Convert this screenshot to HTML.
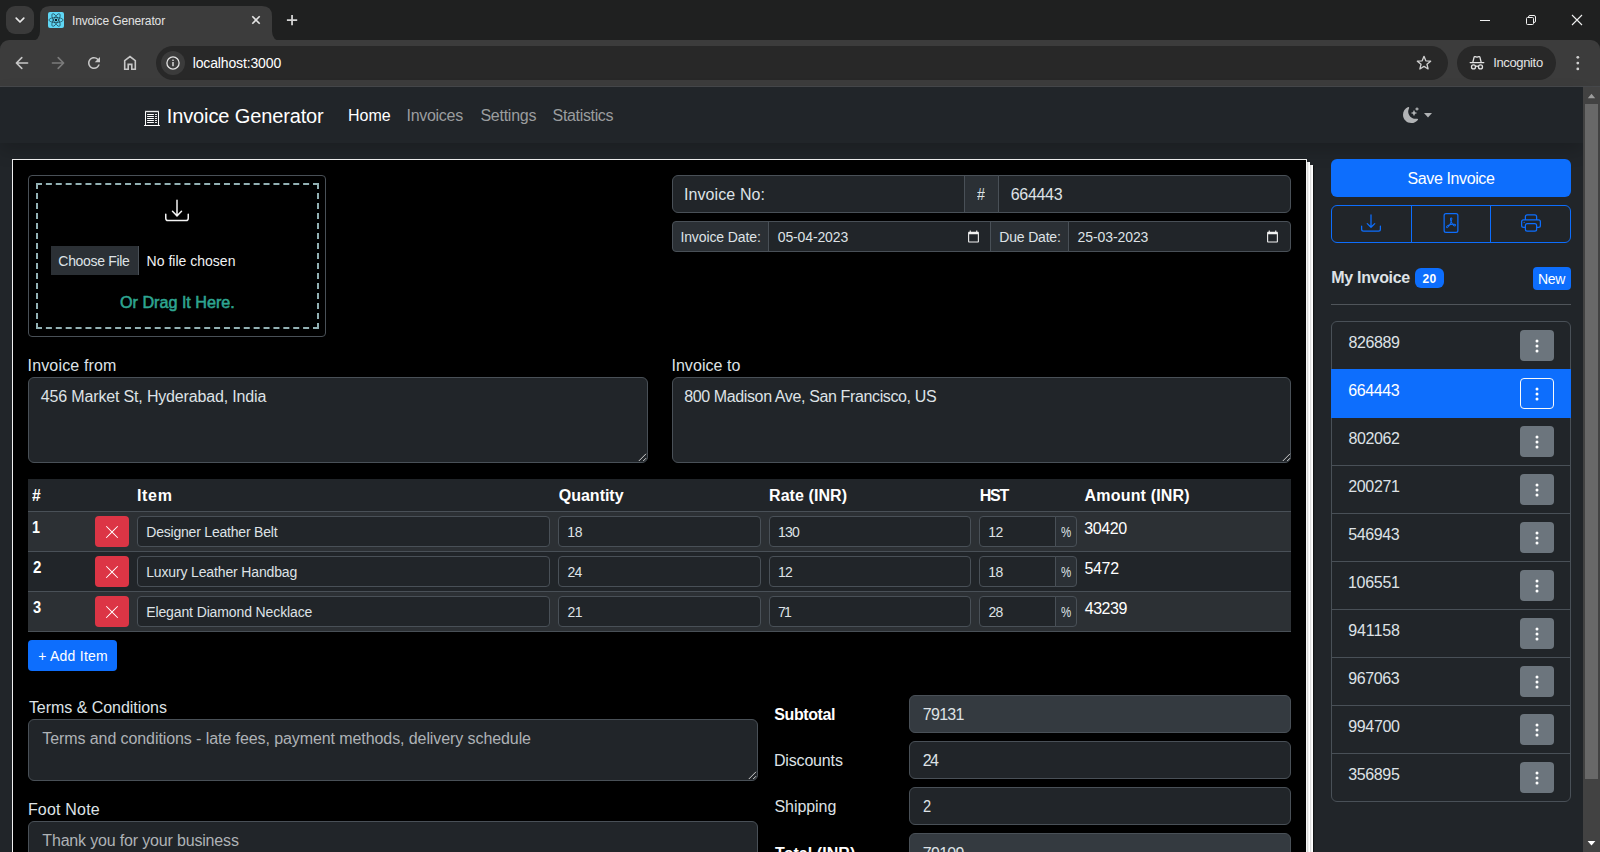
<!DOCTYPE html>
<html lang="en">
<head>
<meta charset="utf-8">
<title>Invoice Generator</title>
<style>
*{box-sizing:border-box}
html,body{margin:0;padding:0}
body{width:1600px;height:852px;overflow:hidden;position:relative;background:#212529;font-family:"Liberation Sans",sans-serif;color:#dee2e6}
.a{position:absolute}
.t{position:absolute;white-space:pre;line-height:1;color:#dee2e6}
svg{position:absolute;overflow:visible}
/* browser chrome */
#strip{left:0;top:0;width:1600px;height:52px;background:#1f2020}
#toolbar{left:0;top:40px;width:1600px;height:47px;background:#3c3c3c;border-radius:9px 9px 0 0;border-bottom:1px solid #46484b}
#tabsearch{left:6px;top:6px;width:28px;height:28px;border-radius:9px;background:#3a3a3a}
.pill{background:#282828;border-radius:17px;height:34px;top:46px}
/* page */
#page{left:0;top:87px;width:1583px;height:765px;background:#212529;overflow:hidden}
#nav{left:0;top:87px;width:1583px;height:56px;background:#212529;box-shadow:0 8px 16px rgba(0,0,0,.17)}
#sbar{left:1583px;top:87px;width:17px;height:765px;background:#424242}
#thumb{left:1585px;top:104px;width:13px;height:675px;background:#686868}
#card{left:12px;top:159px;width:1295.2px;height:720px;background:#000;border:1px solid #f1f1f1;box-shadow:1px 3px 0 #dadada,2px 3px 0 #f0f0f0,3px 3px 0 #fff,4px 6px 0 #dedede,5px 6px 0 #f6f6f6,6px 6px 0 #fff,7px 7px 1px rgba(0,0,0,.45)}
.inp{position:absolute;background:#212529;border:1px solid #495057;border-radius:6px}
.sm{border-radius:4px}
.igt{position:absolute;background:#2b3035;border:1px solid #495057}
.ro{background:#343a40}
.del{position:absolute;width:34px;height:31px;background:#dc3545;border-radius:4px}
.keb{position:absolute;left:1520px;width:34px;height:31px;background:#6c757d;border-radius:4px}
.hl{position:absolute;height:1px;background:#495057}
.pri{background:#0d6efd}
</style>
</head>
<body>
<!-- ===== browser chrome ===== -->
<div class="a" id="strip"></div>
<div class="a" id="tabsearch"></div>
<svg style="left:0;top:0" width="1600" height="87" viewBox="0 0 1600 87">
  <path d="M30 41 Q40 41 40 31 L40 16 Q40 6 50 6 L262 6 Q272 6 272 16 L272 31 Q272 41 282 41 Z" fill="#3c3c3c"/>
  <!-- tab search chevron -->
  <path d="M16.2 18.2 L20 22 L23.8 18.2" fill="none" stroke="#e8e8e8" stroke-width="1.7" stroke-linecap="round" stroke-linejoin="round"/>
  <!-- favicon -->
  <rect x="48" y="12" width="16" height="16" rx="2" fill="#5fd7f5"/>
  <g fill="none" stroke="#173642" stroke-width="0.75" stroke-opacity=".85">
    <ellipse cx="56" cy="20" rx="7.100" ry="2.500"/>
    <ellipse cx="56" cy="20" rx="7.100" ry="2.500" transform="rotate(60 56 20)"/>
    <ellipse cx="56" cy="20" rx="7.100" ry="2.500" transform="rotate(120 56 20)"/>
  </g>
  <circle cx="56" cy="20" r="1.250" fill="#0c1d24"/>
  <!-- tab close -->
  <path d="M252.300 16.300 L259.700 23.700 M259.700 16.300 L252.300 23.700" stroke="#e3e3e3" stroke-width="1.6"/>
  <!-- new tab plus -->
  <path d="M286.900 20.200 H297.200 M292.050 15.100 V25.300" stroke="#d4d4d4" stroke-width="1.8"/>
  <!-- window controls -->
  <path d="M1480 20.500 H1490" stroke="#f0f0f0" stroke-width="1"/>
  <rect x="1526.500" y="17.500" width="7" height="7" rx="1" fill="none" stroke="#f0f0f0" stroke-width="1"/>
  <path d="M1528.5 17.5 V17 Q1528.500 15.500 1530 15.500 H1534 Q1535.500 15.500 1535.500 17 V21 Q1535.500 22.500 1534 22.500 H1533.500" fill="none" stroke="#f0f0f0" stroke-width="1"/>
  <path d="M1572 15 L1582 25 M1582 15 L1572 25" stroke="#f0f0f0" stroke-width="1.1"/>
</svg>
<div class="a" id="toolbar"></div>
<div class="a pill" style="left:156px;width:1292px"></div>
<div class="a pill" style="left:1457px;width:99px"></div>
<div class="a" style="left:161px;top:51px;width:24px;height:24px;border-radius:12px;background:#3b3b3b"></div>
<svg style="left:0;top:41px" width="1600" height="46" viewBox="0 41 1600 46">
  <!-- back -->
  <path d="M27.600 63 H17 M21.800 57.600 L16.400 63 L21.800 68.400" fill="none" stroke="#c7c7c7" stroke-width="1.6" stroke-linecap="round" stroke-linejoin="round"/>
  <!-- forward -->
  <path d="M52.400 63 H63 M58.200 57.600 L63.600 63 L58.200 68.400" fill="none" stroke="#7b7b7b" stroke-width="1.6" stroke-linecap="round" stroke-linejoin="round"/>
  <!-- reload -->
  <path transform="translate(85 54) scale(.75)" fill="#c7c7c7" d="M17.650 6.350A7.958 7.958 0 0 0 12 4c-4.420 0-7.990 3.580-7.990 8s3.570 8 7.990 8c3.730 0 6.840-2.550 7.730-6h-2.080A5.990 5.990 0 0 1 12 18c-3.310 0-6-2.690-6-6s2.690-6 6-6c1.660 0 3.140.69 4.220 1.780L13 11h7V4l-2.350 2.350z"/>
  <!-- home -->
  <path d="M124.700 69.300 V60.600 L130 56.600 L135.300 60.600 V69.300 H131.800 V64.400 H128.200 V69.300 Z" fill="none" stroke="#c7c7c7" stroke-width="1.6" stroke-linejoin="miter"/>
  <!-- info -->
  <circle cx="173" cy="63" r="6.100" fill="none" stroke="#e3e3e3" stroke-width="1.3"/>
  <rect x="172.300" y="62" width="1.400" height="4.200" fill="#e3e3e3"/>
  <rect x="172.300" y="59.600" width="1.400" height="1.400" fill="#e3e3e3"/>
  <!-- star -->
  <path d="M1424.00 56.30 L1425.82 60.79 L1430.66 61.14 L1426.95 64.26 L1428.11 68.96 L1424.00 66.40 L1419.89 68.96 L1421.05 64.26 L1417.34 61.14 L1422.18 60.79 Z" fill="none" stroke="#d0d0d0" stroke-width="1.3" stroke-linejoin="round"/>
  <!-- incognito -->
  <g fill="none" stroke="#e3e3e3" stroke-width="1.3" stroke-linejoin="round">
    <path d="M1470.200 62.600 H1483.800" stroke-linecap="round"/>
    <path d="M1472.800 62.300 L1474.100 57.200 Q1474.300 56.400 1475.100 56.600 L1477 57.100 L1478.900 56.600 Q1479.700 56.400 1479.900 57.200 L1481.200 62.300"/>
    <circle cx="1473.500" cy="66.900" r="2"/>
    <circle cx="1480.500" cy="66.900" r="2"/>
    <path d="M1475.500 66.400 Q1477 65.700 1478.500 66.400"/>
  </g>
  <!-- menu dots -->
  <circle cx="1577.800" cy="57.300" r="1.400" fill="#d0d0d0"/>
  <circle cx="1577.800" cy="63.100" r="1.400" fill="#d0d0d0"/>
  <circle cx="1577.800" cy="68.900" r="1.400" fill="#d0d0d0"/>
</svg>

<!-- ===== page ===== -->
<div class="a" id="page"></div>
<!-- paper card -->
<div class="a" id="card"></div>
<div class="a" id="nav"></div>
<!-- scrollbar -->
<div class="a" id="sbar"></div>
<div class="a" id="thumb"></div>
<svg style="left:1583px;top:87px" width="17" height="765" viewBox="0 0 17 765">
  <path d="M4.800 11.300 L8.500 6.800 L12.200 11.300 Z" fill="#9d9d9d"/>
  <path d="M4.600 754 L8.500 758.500 L12.400 754 Z" fill="#ffffff"/>
</svg>
<!-- navbar icons -->
<svg style="left:144px;top:109.600px" width="16" height="16" viewBox="0 0 16 16" fill="#fff">
  <path d="M3 4.500a.5.5 0 0 1 .5-.5h6a.5.5 0 1 1 0 1h-6a.5.5 0 0 1-.5-.5m0 2a.5.5 0 0 1 .5-.5h6a.5.5 0 1 1 0 1h-6a.5.5 0 0 1-.5-.5m0 2a.5.5 0 0 1 .5-.5h6a.5.5 0 1 1 0 1h-6a.5.5 0 0 1-.5-.5m0 2a.5.5 0 0 1 .5-.5h6a.5.5 0 0 1 0 1h-6a.5.5 0 0 1-.5-.5m0 2a.5.5 0 0 1 .5-.5h6a.5.5 0 0 1 0 1h-6a.5.5 0 0 1-.5-.5M11.500 4a.5.5 0 0 0 0 1h1a.5.5 0 0 0 0-1zm0 2a.5.5 0 0 0 0 1h1a.5.5 0 0 0 0-1zm0 2a.5.5 0 0 0 0 1h1a.5.5 0 0 0 0-1zm0 2a.5.5 0 0 0 0 1h1a.5.5 0 0 0 0-1zm0 2a.5.5 0 0 0 0 1h1a.5.5 0 0 0 0-1z"/>
  <path d="M2.354.646a.5.5 0 0 0-.801.13l-.5 1A.5.5 0 0 0 1 2v13H.5a.5.5 0 0 0 0 1h15a.5.5 0 0 0 0-1H15V2a.5.5 0 0 0-.053-.224l-.5-1a.5.5 0 0 0-.8-.13L13 1.293l-.646-.647a.5.5 0 0 0-.708 0L11 1.293l-.646-.647a.5.5 0 0 0-.708 0L9 1.293 8.354.646a.5.5 0 0 0-.708 0L7 1.293 6.354.646a.5.5 0 0 0-.708 0L5 1.293 4.354.646a.5.5 0 0 0-.708 0L3 1.293zm-.217 1.198.51.510a.5.5 0 0 0 .707 0L4 1.707l.646.647a.5.5 0 0 0 .708 0L6 1.707l.646.647a.5.5 0 0 0 .708 0L8 1.707l.646.647a.5.5 0 0 0 .708 0L10 1.707l.646.647a.5.5 0 0 0 .708 0L12 1.707l.646.647a.5.5 0 0 0 .708 0l.509-.510.137.274V15H2V2.118z"/>
</svg>
<svg style="left:1403px;top:106.500px" width="16" height="16" viewBox="0 0 16 16" fill="#b1b3b5">
  <path d="M6 .278a.77.77 0 0 1 .08.858 7.200 7.200 0 0 0-.878 3.460c0 4.021 3.278 7.277 7.318 7.277q.792-.001 1.533-.160a.79.79 0 0 1 .81.316.73.73 0 0 1-.031.893A8.350 8.350 0 0 1 8.344 16C3.734 16 0 12.286 0 7.710 0 4.266 2.114 1.312 5.124.060A.75.75 0 0 1 6 .278"/>
  <path d="M10.794 3.148a.217.217 0 0 1 .412 0l.387 1.162c.173.518.579.924 1.097 1.097l1.162.387a.217.217 0 0 1 0 .412l-1.162.387a1.730 1.730 0 0 0-1.097 1.097l-.387 1.162a.217.217 0 0 1-.412 0l-.387-1.162A1.730 1.730 0 0 0 9.310 6.593l-1.162-.387a.217.217 0 0 1 0-.412l1.162-.387a1.730 1.730 0 0 0 1.097-1.097zM13.863.099a.145.145 0 0 1 .274 0l.258.774c.115.346.386.617.732.732l.774.258a.145.145 0 0 1 0 .274l-.774.258a1.160 1.160 0 0 0-.732.732l-.258.774a.145.145 0 0 1-.274 0l-.258-.774a1.160 1.160 0 0 0-.732-.732l-.774-.258a.145.145 0 0 1 0-.274l.774-.258c.346-.115.617-.386.732-.732z"/>
</svg>
<svg style="left:1424px;top:113px" width="8" height="4.500" viewBox="0 0 8 4.500"><path d="M0 0 H8 L4 4.500 Z" fill="#b1b3b5"/></svg>

<!-- drop zone -->
<div class="a" style="left:28px;top:175px;width:298px;height:162px;border:1px solid #495057;border-radius:4px"></div>
<div class="a" style="left:36px;top:183px;width:283px;height:146px;outline:2px dashed #92b0b3;outline-offset:-2px"></div>
<svg style="left:165px;top:198px" width="24" height="25" viewBox="0 0 16 16" preserveAspectRatio="none" fill="#f4f4f4">
  <path d="M.5 9.900a.5.5 0 0 1 .5.5v2.500a1 1 0 0 0 1 1h12a1 1 0 0 0 1-1v-2.500a.5.5 0 0 1 1 0v2.500a2 2 0 0 1-2 2H2a2 2 0 0 1-2-2v-2.500a.5.5 0 0 1 .5-.5"/>
  <path d="M7.646 11.854a.5.5 0 0 0 .708 0l3-3a.5.5 0 0 0-.708-.708L8.500 10.293V1.500a.5.5 0 0 0-1 0v8.793L5.354 8.146a.5.5 0 1 0-.708.708z"/>
</svg>
<div class="a" style="left:51px;top:246px;width:88px;height:29px;background:#2b3035;border-right:1px solid #495057"></div>

<!-- invoice no -->
<div class="inp" style="left:672px;top:175px;width:293px;height:38px;border-radius:6px 0 0 6px"></div>
<div class="igt" style="left:964px;top:175px;width:35px;height:38px"></div>
<div class="inp" style="left:998px;top:175px;width:293.200px;height:38px;border-radius:0 6px 6px 0"></div>
<!-- dates -->
<div class="igt" style="left:672px;top:221px;width:97px;height:31px;border-radius:4px 0 0 4px"></div>
<div class="inp" style="left:768px;top:221px;width:223px;height:31px;border-radius:0"></div>
<div class="igt" style="left:990px;top:221px;width:79px;height:31px"></div>
<div class="inp" style="left:1068px;top:221px;width:223.200px;height:31px;border-radius:0 4px 4px 0"></div>
<svg style="left:966.600px;top:229.900px" width="13" height="13" viewBox="0 0 24 24" fill="#f2f2f2"><path d="M20 3h-1V1h-2v2H7V1H5v2H4c-1.100 0-2 .9-2 2v16c0 1.100.9 2 2 2h16c1.100 0 2-.9 2-2V5c0-1.100-.9-2-2-2zm0 18H4V8h16v13z"/></svg>
<svg style="left:1266px;top:229.900px" width="13" height="13" viewBox="0 0 24 24" fill="#f2f2f2"><path d="M20 3h-1V1h-2v2H7V1H5v2H4c-1.100 0-2 .9-2 2v16c0 1.100.9 2 2 2h16c1.100 0 2-.9 2-2V5c0-1.100-.9-2-2-2zm0 18H4V8h16v13z"/></svg>

<!-- addresses -->
<div class="inp" style="left:28px;top:377px;width:619.600px;height:86px"></div>
<div class="inp" style="left:671.600px;top:377px;width:619.600px;height:86px"></div>
<svg style="left:636px;top:451px" width="10" height="10" viewBox="0 0 10 10" stroke="#cfcfcf" stroke-width="1"><path d="M10 2.800 L2.800 10 M10 7.200 L7.200 10"/></svg>
<svg style="left:1279.600px;top:451px" width="10" height="10" viewBox="0 0 10 10" stroke="#cfcfcf" stroke-width="1"><path d="M10 2.800 L2.800 10 M10 7.200 L7.200 10"/></svg>

<!-- table -->
<div class="a" style="left:28px;top:479px;width:1263.200px;height:153px;background:#212529"></div>
<div class="a" style="left:28px;top:512px;width:1263.200px;height:39px;background:#2c3034"></div>
<div class="a" style="left:28px;top:592px;width:1263.200px;height:39px;background:#2c3034"></div>
<div class="hl" style="left:28px;top:511px;width:1263.200px"></div>
<div class="hl" style="left:28px;top:551px;width:1263.200px"></div>
<div class="hl" style="left:28px;top:591px;width:1263.200px"></div>
<div class="hl" style="left:28px;top:631px;width:1263.200px"></div>
<div class="del" style="left:95px;top:516px"></div>
<svg style="left:104px;top:524px" width="16" height="16" viewBox="0 0 16 16" fill="#fff"><path d="M2.146 2.854a.5.5 0 1 1 .708-.708L8 7.293l5.146-5.147a.5.5 0 0 1 .708.708L8.707 8l5.147 5.146a.5.5 0 0 1-.708.708L8 8.707l-5.146 5.147a.5.5 0 0 1-.708-.708L7.293 8z"/></svg>
<div class="inp sm" style="left:137px;top:516px;width:413px;height:31px"></div>
<div class="inp sm" style="left:558px;top:516px;width:203px;height:31px"></div>
<div class="inp sm" style="left:769px;top:516px;width:202px;height:31px"></div>
<div class="inp sm" style="left:979px;top:516px;width:77px;height:31px;border-radius:4px 0 0 4px"></div>
<div class="igt" style="left:1055px;top:516px;width:22px;height:31px;border-radius:0 4px 4px 0"></div>
<div class="del" style="left:95px;top:556px"></div>
<svg style="left:104px;top:564px" width="16" height="16" viewBox="0 0 16 16" fill="#fff"><path d="M2.146 2.854a.5.5 0 1 1 .708-.708L8 7.293l5.146-5.147a.5.5 0 0 1 .708.708L8.707 8l5.147 5.146a.5.5 0 0 1-.708.708L8 8.707l-5.146 5.147a.5.5 0 0 1-.708-.708L7.293 8z"/></svg>
<div class="inp sm" style="left:137px;top:556px;width:413px;height:31px"></div>
<div class="inp sm" style="left:558px;top:556px;width:203px;height:31px"></div>
<div class="inp sm" style="left:769px;top:556px;width:202px;height:31px"></div>
<div class="inp sm" style="left:979px;top:556px;width:77px;height:31px;border-radius:4px 0 0 4px"></div>
<div class="igt" style="left:1055px;top:556px;width:22px;height:31px;border-radius:0 4px 4px 0"></div>
<div class="del" style="left:95px;top:596px"></div>
<svg style="left:104px;top:604px" width="16" height="16" viewBox="0 0 16 16" fill="#fff"><path d="M2.146 2.854a.5.5 0 1 1 .708-.708L8 7.293l5.146-5.147a.5.5 0 0 1 .708.708L8.707 8l5.147 5.146a.5.5 0 0 1-.708.708L8 8.707l-5.146 5.147a.5.5 0 0 1-.708-.708L7.293 8z"/></svg>
<div class="inp sm" style="left:137px;top:596px;width:413px;height:31px"></div>
<div class="inp sm" style="left:558px;top:596px;width:203px;height:31px"></div>
<div class="inp sm" style="left:769px;top:596px;width:202px;height:31px"></div>
<div class="inp sm" style="left:979px;top:596px;width:77px;height:31px;border-radius:4px 0 0 4px"></div>
<div class="igt" style="left:1055px;top:596px;width:22px;height:31px;border-radius:0 4px 4px 0"></div>
<div class="a pri" style="left:28px;top:640px;width:89px;height:31px;border-radius:4px"></div>

<!-- terms / footnote -->
<div class="inp" style="left:28px;top:719px;width:730px;height:62px"></div>
<svg style="left:746px;top:769px" width="10" height="10" viewBox="0 0 10 10" stroke="#cfcfcf" stroke-width="1"><path d="M10 2.800 L2.800 10 M10 7.200 L7.200 10"/></svg>
<div class="inp" style="left:28px;top:821px;width:730px;height:62px"></div>
<!-- totals -->
<div class="inp ro" style="left:909px;top:695px;width:382.200px;height:38px"></div>
<div class="inp" style="left:909px;top:741px;width:382.200px;height:38px"></div>
<div class="inp" style="left:909px;top:787px;width:382.200px;height:38px"></div>
<div class="inp ro" style="left:909px;top:833px;width:382.200px;height:38px"></div>

<!-- sidebar -->
<div class="a pri" style="left:1331px;top:159px;width:240px;height:38px;border-radius:6px"></div>
<div class="a" style="left:1331px;top:205px;width:240px;height:38px;border:1px solid #0d6efd;border-radius:6px"></div>
<div class="a" style="left:1411px;top:205px;width:1px;height:38px;background:#0d6efd"></div>
<div class="a" style="left:1490px;top:205px;width:1px;height:38px;background:#0d6efd"></div>
<svg style="left:1361px;top:213px" width="20" height="20" viewBox="0 0 16 16" fill="#0d6efd">
  <path d="M.5 9.900a.5.5 0 0 1 .5.5v2.500a1 1 0 0 0 1 1h12a1 1 0 0 0 1-1v-2.500a.5.5 0 0 1 1 0v2.500a2 2 0 0 1-2 2H2a2 2 0 0 1-2-2v-2.500a.5.5 0 0 1 .5-.5"/>
  <path d="M7.646 11.854a.5.5 0 0 0 .708 0l3-3a.5.5 0 0 0-.708-.708L8.500 10.293V1.500a.5.5 0 0 0-1 0v8.793L5.354 8.146a.5.5 0 1 0-.708.708z"/>
</svg>
<svg style="left:1441px;top:213px" width="20" height="20" viewBox="0 0 16 16" fill="#0d6efd">
  <path d="M4 0a2 2 0 0 0-2 2v12a2 2 0 0 0 2 2h8a2 2 0 0 0 2-2V2a2 2 0 0 0-2-2zm0 1h8a1 1 0 0 1 1 1v12a1 1 0 0 1-1 1H4a1 1 0 0 1-1-1V2a1 1 0 0 1 1-1"/>
  <path d="M4.603 12.087a.81.81 0 0 1-.438-.42c-.195-.388-.13-.776.08-1.102.198-.307.526-.568.897-.787a7.680 7.680 0 0 1 1.482-.645 19.701 19.701 0 0 0 1.062-2.227 7.269 7.269 0 0 1-.43-1.295c-.086-.4-.119-.796-.046-1.136.075-.354.274-.672.65-.823.192-.077.4-.12.602-.077a.7.7 0 0 1 .477.365c.088.164.12.356.127.538.007.187-.012.395-.047.614-.084.51-.27 1.134-.52 1.794a10.954 10.954 0 0 0 .98 1.686 5.753 5.753 0 0 1 1.334.050c.364.065.734.195.96.465.12.144.193.32.2.518.007.192-.047.382-.138.563a1.040 1.040 0 0 1-.354.416.856.856 0 0 1-.51.138c-.331-.014-.654-.196-.933-.417a5.716 5.716 0 0 1-.911-.95 11.642 11.642 0 0 0-1.997.406 11.311 11.311 0 0 1-1.021 1.510c-.29.35-.608.655-.926.787a.793.793 0 0 1-.58.029zm1.379-1.901c-.166.076-.32.156-.459.238-.328.194-.541.383-.647.547-.094.145-.096.25-.04.361.010.022.020.036.026.044a.27.27 0 0 0 .035-.012c.137-.056.355-.235.635-.572a8.180 8.180 0 0 0 .45-.606zm1.640-1.330a12.647 12.647 0 0 1 1.010-.193 11.666 11.666 0 0 1-.51-.858 20.741 20.741 0 0 1-.5 1.050zm2.446.45c.15.162.296.3.435.41.24.19.407.253.498.256a.107.107 0 0 0 .070-.015.307.307 0 0 0 .094-.125.436.436 0 0 0 .059-.2.095.095 0 0 0-.026-.063c-.052-.062-.2-.152-.518-.209a3.881 3.881 0 0 0-.612-.053zM8.078 5.800a6.700 6.700 0 0 0 .2-.828c.031-.188.043-.343.038-.465a.613.613 0 0 0-.032-.198.517.517 0 0 0-.145.040c-.087.035-.158.106-.196.283-.04.192-.03.469.046.822.024.111.054.227.090.346z"/>
</svg>
<svg style="left:1521px;top:213px" width="20" height="20" viewBox="0 0 16 16" fill="#0d6efd">
  <path d="M2.500 8a.5.5 0 1 0 0-1 .5.5 0 0 0 0 1"/>
  <path d="M5 1a2 2 0 0 0-2 2v2H2a2 2 0 0 0-2 2v3a2 2 0 0 0 2 2h1v1a2 2 0 0 0 2 2h6a2 2 0 0 0 2-2v-1h1a2 2 0 0 0 2-2V7a2 2 0 0 0-2-2h-1V3a2 2 0 0 0-2-2zM4 3a1 1 0 0 1 1-1h6a1 1 0 0 1 1 1v2H4zm1 5a2 2 0 0 0-2 2v1H2a1 1 0 0 1-1-1V7a1 1 0 0 1 1-1h12a1 1 0 0 1 1 1v3a1 1 0 0 1-1 1h-1v-1a2 2 0 0 0-2-2zm7 2v3a1 1 0 0 1-1 1H5a1 1 0 0 1-1-1v-3a1 1 0 0 1 1-1h6a1 1 0 0 1 1 1"/>
</svg>
<div class="a pri" style="left:1415px;top:268px;width:29px;height:20px;border-radius:6px"></div>
<div class="a pri" style="left:1533px;top:267px;width:38px;height:23px;border-radius:4px"></div>
<div class="a" style="left:1331px;top:304px;width:240px;height:1px;background:#50555a"></div>
<div class="a" style="left:1331px;top:321px;width:240px;height:481px;border:1px solid #495057;border-radius:6px"></div>
<div class="keb" style="top:330px"></div>
<svg style="left:1529px;top:337.5px" width="16" height="16" viewBox="0 0 16 16" fill="#fff"><path d="M9.500 13a1.500 1.500 0 1 1-3 0 1.500 1.500 0 0 1 3 0m0-5a1.500 1.500 0 1 1-3 0 1.500 1.500 0 0 1 3 0m0-5a1.500 1.500 0 1 1-3 0 1.500 1.500 0 0 1 3 0"/></svg>
<div class="a pri" style="left:1331px;top:369px;width:240px;height:49px"></div>
<div class="keb" style="top:378px;background:none;border:1px solid #f8f9fa"></div>
<svg style="left:1529px;top:385.5px" width="16" height="16" viewBox="0 0 16 16" fill="#fff"><path d="M9.500 13a1.500 1.500 0 1 1-3 0 1.500 1.500 0 0 1 3 0m0-5a1.500 1.500 0 1 1-3 0 1.500 1.500 0 0 1 3 0m0-5a1.500 1.500 0 1 1-3 0 1.500 1.500 0 0 1 3 0"/></svg>
<div class="keb" style="top:426px"></div>
<svg style="left:1529px;top:433.5px" width="16" height="16" viewBox="0 0 16 16" fill="#fff"><path d="M9.500 13a1.500 1.500 0 1 1-3 0 1.500 1.500 0 0 1 3 0m0-5a1.500 1.500 0 1 1-3 0 1.500 1.500 0 0 1 3 0m0-5a1.500 1.500 0 1 1-3 0 1.500 1.500 0 0 1 3 0"/></svg>
<div class="hl" style="left:1332px;top:465px;width:238px"></div>
<div class="keb" style="top:474px"></div>
<svg style="left:1529px;top:481.5px" width="16" height="16" viewBox="0 0 16 16" fill="#fff"><path d="M9.500 13a1.500 1.500 0 1 1-3 0 1.500 1.500 0 0 1 3 0m0-5a1.500 1.500 0 1 1-3 0 1.500 1.500 0 0 1 3 0m0-5a1.500 1.500 0 1 1-3 0 1.500 1.500 0 0 1 3 0"/></svg>
<div class="hl" style="left:1332px;top:513px;width:238px"></div>
<div class="keb" style="top:522px"></div>
<svg style="left:1529px;top:529.5px" width="16" height="16" viewBox="0 0 16 16" fill="#fff"><path d="M9.500 13a1.500 1.500 0 1 1-3 0 1.500 1.500 0 0 1 3 0m0-5a1.500 1.500 0 1 1-3 0 1.500 1.500 0 0 1 3 0m0-5a1.500 1.500 0 1 1-3 0 1.500 1.500 0 0 1 3 0"/></svg>
<div class="hl" style="left:1332px;top:561px;width:238px"></div>
<div class="keb" style="top:570px"></div>
<svg style="left:1529px;top:577.5px" width="16" height="16" viewBox="0 0 16 16" fill="#fff"><path d="M9.500 13a1.500 1.500 0 1 1-3 0 1.500 1.500 0 0 1 3 0m0-5a1.500 1.500 0 1 1-3 0 1.500 1.500 0 0 1 3 0m0-5a1.500 1.500 0 1 1-3 0 1.500 1.500 0 0 1 3 0"/></svg>
<div class="hl" style="left:1332px;top:609px;width:238px"></div>
<div class="keb" style="top:618px"></div>
<svg style="left:1529px;top:625.5px" width="16" height="16" viewBox="0 0 16 16" fill="#fff"><path d="M9.500 13a1.500 1.500 0 1 1-3 0 1.500 1.500 0 0 1 3 0m0-5a1.500 1.500 0 1 1-3 0 1.500 1.500 0 0 1 3 0m0-5a1.500 1.500 0 1 1-3 0 1.500 1.500 0 0 1 3 0"/></svg>
<div class="hl" style="left:1332px;top:657px;width:238px"></div>
<div class="keb" style="top:666px"></div>
<svg style="left:1529px;top:673.5px" width="16" height="16" viewBox="0 0 16 16" fill="#fff"><path d="M9.500 13a1.500 1.500 0 1 1-3 0 1.500 1.500 0 0 1 3 0m0-5a1.500 1.500 0 1 1-3 0 1.500 1.500 0 0 1 3 0m0-5a1.500 1.500 0 1 1-3 0 1.500 1.500 0 0 1 3 0"/></svg>
<div class="hl" style="left:1332px;top:705px;width:238px"></div>
<div class="keb" style="top:714px"></div>
<svg style="left:1529px;top:721.5px" width="16" height="16" viewBox="0 0 16 16" fill="#fff"><path d="M9.500 13a1.500 1.500 0 1 1-3 0 1.500 1.500 0 0 1 3 0m0-5a1.500 1.500 0 1 1-3 0 1.500 1.500 0 0 1 3 0m0-5a1.500 1.500 0 1 1-3 0 1.500 1.500 0 0 1 3 0"/></svg>
<div class="hl" style="left:1332px;top:753px;width:238px"></div>
<div class="keb" style="top:762px"></div>
<svg style="left:1529px;top:769.5px" width="16" height="16" viewBox="0 0 16 16" fill="#fff"><path d="M9.500 13a1.500 1.500 0 1 1-3 0 1.500 1.500 0 0 1 3 0m0-5a1.500 1.500 0 1 1-3 0 1.500 1.500 0 0 1 3 0m0-5a1.500 1.500 0 1 1-3 0 1.500 1.500 0 0 1 3 0"/></svg>

<span class="t" style="left:71.98px;top:15px;font-size:12px;color:#e3e3e3;letter-spacing:-0.139px;">Invoice Generator</span>
<span class="t" style="left:192.66px;top:56px;font-size:14px;color:#ffffff;letter-spacing:-0.134px;">localhost:3000</span>
<span class="t" style="left:1493.14px;top:56px;font-size:13px;color:#e3e3e3;letter-spacing:-0.347px;">Incognito</span>
<span class="t" style="left:166.82px;top:106px;font-size:20px;color:#ffffff;letter-spacing:-0.128px;">Invoice Generator</span>
<span class="t" style="left:347.91px;top:108px;font-size:16px;color:#ffffff;letter-spacing:0.020px;">Home</span>
<span class="t" style="left:406.47px;top:108px;font-size:16px;color:#9b9d9f;letter-spacing:-0.288px;">Invoices</span>
<span class="t" style="left:480.40px;top:108px;font-size:16px;color:#9b9d9f;letter-spacing:-0.256px;">Settings</span>
<span class="t" style="left:552.59px;top:108px;font-size:16px;color:#9b9d9f;letter-spacing:-0.342px;">Statistics</span>
<span class="t" style="left:58.36px;top:254px;font-size:14px;letter-spacing:-0.316px;">Choose File</span>
<span class="t" style="left:146.56px;top:254px;font-size:14px;color:#f0f2f4;letter-spacing:0.015px;">No file chosen</span>
<span class="t" style="left:119.96px;top:294px;font-size:16.2px;-webkit-text-stroke:0.55px #2ea591;color:#2ea591;letter-spacing:-0.017px;">Or Drag It Here.</span>
<span class="t" style="left:683.88px;top:187px;font-size:16px;letter-spacing:0.113px;">Invoice No:</span>
<span class="t" style="left:977.08px;top:187px;font-size:16px;transform:scaleX(0.887);transform-origin:0 0;">#</span>
<span class="t" style="left:1010.76px;top:187px;font-size:16px;letter-spacing:-0.320px;">664443</span>
<span class="t" style="left:680.39px;top:230px;font-size:14px;letter-spacing:-0.097px;">Invoice Date:</span>
<span class="t" style="left:777.72px;top:230px;font-size:14px;letter-spacing:-0.126px;">05-04-2023</span>
<span class="t" style="left:999.35px;top:230px;font-size:14px;letter-spacing:-0.190px;">Due Date:</span>
<span class="t" style="left:1077.47px;top:230px;font-size:14px;letter-spacing:-0.079px;">25-03-2023</span>
<span class="t" style="left:27.56px;top:358px;font-size:16px;letter-spacing:0.159px;">Invoice from</span>
<span class="t" style="left:40.85px;top:389px;font-size:16px;letter-spacing:-0.163px;">456 Market St, Hyderabad, India</span>
<span class="t" style="left:671.42px;top:358px;font-size:16px;letter-spacing:0.060px;">Invoice to</span>
<span class="t" style="left:684.15px;top:389px;font-size:16px;letter-spacing:-0.372px;">800 Madison Ave, San Francisco, US</span>
<span class="t" style="left:32.19px;top:488px;font-size:16px;font-weight:700;color:#ffffff;transform:scaleX(0.977);transform-origin:0 0;">#</span>
<span class="t" style="left:137.03px;top:488px;font-size:16px;font-weight:700;color:#ffffff;letter-spacing:0.658px;">Item</span>
<span class="t" style="left:558.80px;top:488px;font-size:16px;font-weight:700;color:#ffffff;letter-spacing:-0.015px;">Quantity</span>
<span class="t" style="left:769.03px;top:488px;font-size:16px;font-weight:700;color:#ffffff;letter-spacing:0.076px;">Rate (INR)</span>
<span class="t" style="left:979.65px;top:488px;font-size:16px;font-weight:700;color:#ffffff;letter-spacing:-1.194px;">HST</span>
<span class="t" style="left:1084.59px;top:488px;font-size:16px;font-weight:700;color:#ffffff;letter-spacing:0.183px;">Amount (INR)</span>
<span class="t" style="left:32.33px;top:520px;font-size:16px;font-weight:700;color:#ffffff;transform:scaleX(0.895);transform-origin:0 0;">1</span>
<span class="t" style="left:146.22px;top:525px;font-size:14px;letter-spacing:-0.202px;">Designer Leather Belt</span>
<span class="t" style="left:567.22px;top:525px;font-size:14px;letter-spacing:-0.309px;">18</span>
<span class="t" style="left:777.98px;top:525px;font-size:14px;letter-spacing:-0.711px;">130</span>
<span class="t" style="left:988.37px;top:525px;font-size:14px;letter-spacing:-0.526px;">12</span>
<span class="t" style="left:1060.76px;top:525px;font-size:14px;transform:scaleX(0.819);transform-origin:0 0;">%</span>
<span class="t" style="left:1084.36px;top:521px;font-size:16px;color:#ffffff;letter-spacing:-0.437px;">30420</span>
<span class="t" style="left:32.77px;top:560px;font-size:16px;font-weight:700;color:#ffffff;transform:scaleX(0.943);transform-origin:0 0;">2</span>
<span class="t" style="left:146.22px;top:565px;font-size:14px;letter-spacing:-0.148px;">Luxury Leather Handbag</span>
<span class="t" style="left:567.54px;top:565px;font-size:14px;letter-spacing:-0.902px;">24</span>
<span class="t" style="left:777.98px;top:565px;font-size:14px;letter-spacing:-0.691px;">12</span>
<span class="t" style="left:988.37px;top:565px;font-size:14px;letter-spacing:-0.568px;">18</span>
<span class="t" style="left:1060.76px;top:565px;font-size:14px;transform:scaleX(0.819);transform-origin:0 0;">%</span>
<span class="t" style="left:1084.40px;top:561px;font-size:16px;color:#ffffff;letter-spacing:-0.301px;">5472</span>
<span class="t" style="left:32.82px;top:600px;font-size:16px;font-weight:700;color:#ffffff;transform:scaleX(0.913);transform-origin:0 0;">3</span>
<span class="t" style="left:146.22px;top:605px;font-size:14px;letter-spacing:-0.119px;">Elegant Diamond Necklace</span>
<span class="t" style="left:567.54px;top:605px;font-size:14px;letter-spacing:-0.648px;">21</span>
<span class="t" style="left:778.09px;top:605px;font-size:14px;letter-spacing:-1.981px;">71</span>
<span class="t" style="left:988.47px;top:605px;font-size:14px;letter-spacing:-0.667px;">28</span>
<span class="t" style="left:1060.76px;top:605px;font-size:14px;transform:scaleX(0.819);transform-origin:0 0;">%</span>
<span class="t" style="left:1084.81px;top:601px;font-size:16px;color:#ffffff;letter-spacing:-0.491px;">43239</span>
<span class="t" style="left:38.29px;top:649px;font-size:14px;color:#ffffff;letter-spacing:0.231px;">+ Add Item</span>
<span class="t" style="left:28.92px;top:700px;font-size:16px;letter-spacing:-0.043px;">Terms &amp; Conditions</span>
<span class="t" style="left:42.30px;top:731px;font-size:16px;color:#aeb2b6;letter-spacing:-0.086px;">Terms and conditions - late fees, payment methods, delivery schedule</span>
<span class="t" style="left:27.91px;top:802px;font-size:16px;letter-spacing:0.188px;">Foot Note</span>
<span class="t" style="left:42.30px;top:833px;font-size:16px;color:#aeb2b6;letter-spacing:-0.169px;">Thank you for your business</span>
<span class="t" style="left:774.27px;top:707px;font-size:16px;font-weight:700;color:#ffffff;letter-spacing:-0.408px;">Subtotal</span>
<span class="t" style="left:922.84px;top:707px;font-size:16px;letter-spacing:-0.743px;">79131</span>
<span class="t" style="left:773.91px;top:753px;font-size:16px;letter-spacing:-0.158px;">Discounts</span>
<span class="t" style="left:922.86px;top:753px;font-size:16px;letter-spacing:-1.799px;">24</span>
<span class="t" style="left:774.41px;top:799px;font-size:16px;letter-spacing:-0.050px;">Shipping</span>
<span class="t" style="left:922.60px;top:799px;font-size:16px;transform:scaleX(0.917);transform-origin:0 0;">2</span>
<span class="t" style="left:774.99px;top:846px;font-size:16px;font-weight:700;color:#ffffff;letter-spacing:0.059px;">Total (INR)</span>
<span class="t" style="left:922.84px;top:846px;font-size:16px;letter-spacing:-0.743px;">79109</span>
<span class="t" style="left:1407.59px;top:171px;font-size:16px;color:#ffffff;letter-spacing:-0.400px;">Save Invoice</span>
<span class="t" style="left:1331.36px;top:270px;font-size:16px;font-weight:700;letter-spacing:-0.334px;">My Invoice</span>
<span class="t" style="left:1422.57px;top:273px;font-size:12px;font-weight:700;color:#ffffff;letter-spacing:0.359px;">20</span>
<span class="t" style="left:1537.89px;top:272px;font-size:14px;color:#ffffff;letter-spacing:-0.279px;">New</span>
<span class="t" style="left:1348.43px;top:335px;font-size:16px;letter-spacing:-0.387px;">826889</span>
<span class="t" style="left:1348.22px;top:383px;font-size:16px;color:#ffffff;letter-spacing:-0.373px;">664443</span>
<span class="t" style="left:1348.43px;top:431px;font-size:16px;letter-spacing:-0.391px;">802062</span>
<span class="t" style="left:1348.24px;top:479px;font-size:16px;letter-spacing:-0.349px;">200271</span>
<span class="t" style="left:1348.36px;top:527px;font-size:16px;letter-spacing:-0.400px;">546943</span>
<span class="t" style="left:1347.94px;top:575px;font-size:16px;letter-spacing:-0.288px;">106551</span>
<span class="t" style="left:1348.32px;top:623px;font-size:16px;letter-spacing:-0.146px;">941158</span>
<span class="t" style="left:1348.32px;top:671px;font-size:16px;letter-spacing:-0.392px;">967063</span>
<span class="t" style="left:1348.32px;top:719px;font-size:16px;letter-spacing:-0.376px;">994700</span>
<span class="t" style="left:1348.29px;top:767px;font-size:16px;letter-spacing:-0.378px;">356895</span>
</body>
</html>
